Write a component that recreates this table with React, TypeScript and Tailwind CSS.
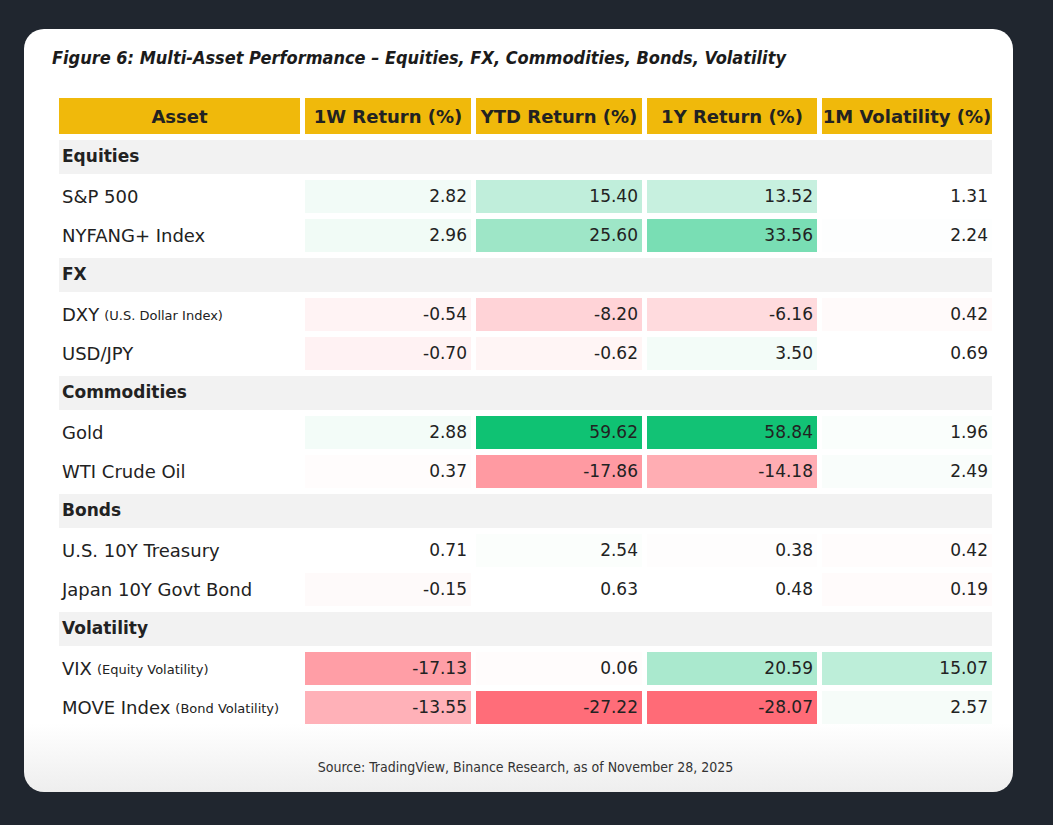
type Row = {
  name: string
  note?: string
  values: Array<[string, string]>
}

type Section = {
  title: string
  rows: Row[]
}

const sections: Section[] = [
  {
    title: "Equities",
    rows: [
      { name: "S&P 500", values: [["2.82", "#f2fbf7"], ["15.40", "#c0eedb"], ["13.52", "#c7f0df"], ["1.31", "#ffffff"]] },
      { name: "NYFANG+ Index", values: [["2.96", "#f1fbf6"], ["25.60", "#9ee6c7"], ["33.56", "#79deb4"], ["2.24", "#fdfefe"]] },
    ],
  },
  {
    title: "FX",
    rows: [
      { name: "DXY", note: "(U.S. Dollar Index)", values: [["-0.54", "#fff3f4"], ["-8.20", "#ffd3d7"], ["-6.16", "#ffdbde"], ["0.42", "#fffafa"]] },
      { name: "USD/JPY", values: [["-0.70", "#fff2f3"], ["-0.62", "#fff5f5"], ["3.50", "#f3fcf8"], ["0.69", "#ffffff"]] },
    ],
  },
  {
    title: "Commodities",
    rows: [
      { name: "Gold", values: [["2.88", "#f3fcf8"], ["59.62", "#0fc273"], ["58.84", "#12c275"], ["1.96", "#fafefc"]] },
      { name: "WTI Crude Oil", values: [["0.37", "#fffcfc"], ["-17.86", "#ff9aa2"], ["-14.18", "#ffadb3"], ["2.49", "#f9fdfb"]] },
    ],
  },
  {
    title: "Bonds",
    rows: [
      { name: "U.S. 10Y Treasury", values: [["0.71", "#ffffff"], ["2.54", "#fbfefc"], ["0.38", "#fefdfd"], ["0.42", "#fffcfc"]] },
      { name: "Japan 10Y Govt Bond", values: [["-0.15", "#fefafa"], ["0.63", "#ffffff"], ["0.48", "#ffffff"], ["0.19", "#fffbfb"]] },
    ],
  },
  {
    title: "Volatility",
    rows: [
      { name: "VIX", note: "(Equity Volatility)", values: [["-17.13", "#ff9ea6"], ["0.06", "#fffcfc"], ["20.59", "#aae9ce"], ["15.07", "#bdeed9"]] },
      { name: "MOVE Index", note: "(Bond Volatility)", values: [["-13.55", "#ffb1b8"], ["-27.22", "#ff6d79"], ["-28.07", "#ff6b77"], ["2.57", "#f6fcf9"]] },
    ],
  },
]

const headers = ["Asset", "1W Return (%)", "YTD Return (%)", "1Y Return (%)", "1M Volatility (%)"]

export default function App() {
  return (
    <div className="min-h-screen bg-[#20262f] pl-[24px] pt-[29px]">
      <div className="w-[989px] h-[763px] rounded-[20px] bg-[linear-gradient(to_bottom,#ffffff_91%,#eeeeee)] pt-[19px]">
        <h2 className="pl-[28px] text-[18px] leading-[20px] font-bold italic text-[#1b1b1b] [font-family:'DejaVu_Sans_Condensed','DejaVu_Sans',sans-serif] [font-stretch:condensed]">
          Figure 6: Multi-Asset Performance – Equities, FX, Commodities, Bonds, Volatility
        </h2>

        <div className="ml-[35px] mt-[30px] w-[933px] [font-family:'DejaVu_Sans',sans-serif] text-[#222222]">
          <div className="grid grid-cols-[241px_166px_166px_170px_170px] gap-x-[5px] gap-y-[6px]">
            {headers.map((h) => (
              <div key={h} className="h-[36px] bg-[#f0b90b] flex items-center justify-center text-[18px] font-bold whitespace-nowrap">
                {h}
              </div>
            ))}

            {sections.map((section) => (
              <Section key={section.title} section={section} />
            ))}
          </div>

          <p className="mt-[33px] text-center text-[14px] leading-[20px] text-[#333333] [font-family:'DejaVu_Sans_Condensed','DejaVu_Sans',sans-serif] [font-stretch:condensed]">
            Source: TradingView, Binance Research, as of November 28, 2025
          </p>
        </div>
      </div>
    </div>
  )
}

function Section({ section }: { section: Section }) {
  return (
    <>
      <div className="col-span-5 h-[34px] bg-[#f2f2f2] flex items-center pl-[3px] text-[17px] font-bold">
        {section.title}
      </div>
      {section.rows.map((row) => (
        <div key={row.name} className="contents">
          <div className="h-[33px] flex items-center pl-[3px] text-[18px] whitespace-nowrap">
            {row.name}
            {row.note && <span className="ml-[5px] text-[13px] pt-[2px]">{row.note}</span>}
          </div>
          {row.values.map(([v, bg], i) => (
            <div
              key={i}
              className="h-[33px] flex items-center justify-end pr-[4px] text-[17px]"
              style={{ backgroundColor: bg }}
            >
              {v}
            </div>
          ))}
        </div>
      ))}
    </>
  )
}
